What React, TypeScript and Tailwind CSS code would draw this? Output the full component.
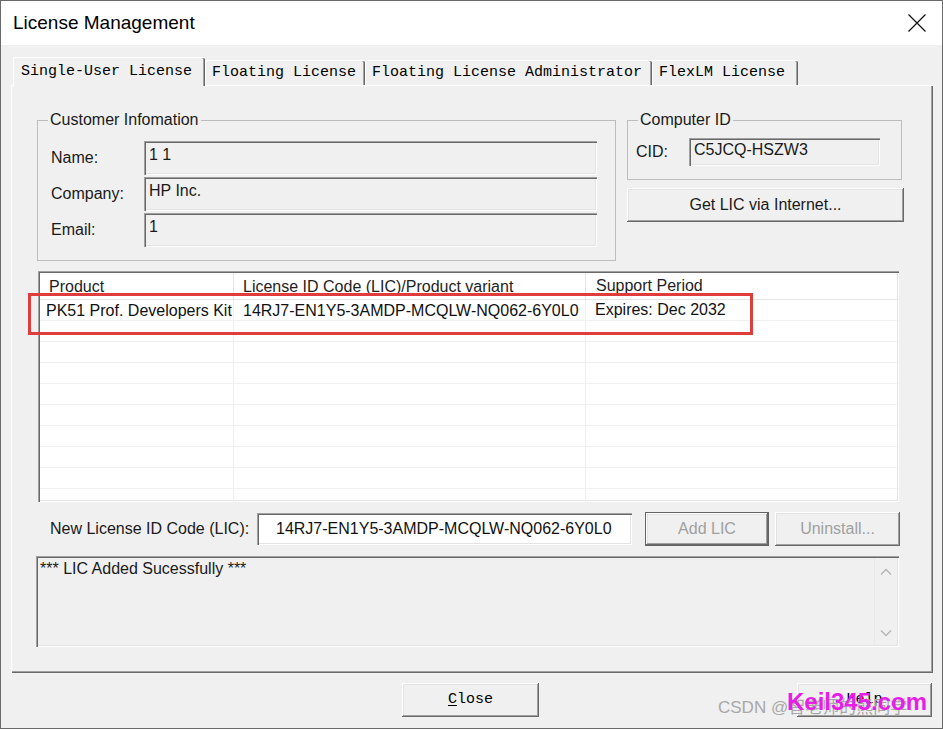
import React from "react";

// Classic Win32 bevels
const sunken =
  "shadow-[inset_1px_1px_0_#a0a0a0,inset_2px_2px_0_#696969,inset_-1px_-1px_0_#ffffff,inset_-2px_-2px_0_#e3e3e3]";
const raised =
  "shadow-[inset_-1px_-1px_0_#696969,inset_1px_1px_0_#ffffff,inset_-2px_-2px_0_#a0a0a0,inset_2px_2px_0_#e3e3e3]";

const sans = "font-['Liberation_Sans',Arial,sans-serif]";
const mono = "font-['Liberation_Mono','Courier_New',monospace]";

const tabs = [
  { label: "Floating License", w: "w-[160px]" },
  { label: "Floating License Administrator", w: "w-[287px]" },
  { label: "FlexLM License", w: "w-[146px]" },
];

const GroupBox = ({
  title,
  className,
  children,
}: {
  title: string;
  className: string;
  children: React.ReactNode;
}) => (
  <div className={`relative border border-[#bcbcbc] ${className}`}>
    <span className="absolute -top-[11px] left-[10px] bg-[#f0f0f0] px-[2px] leading-[20px] text-[#1a1a1a]">
      {title}
    </span>
    {children}
  </div>
);

const ReadOnlyField = ({ value, className }: { value: string; className: string }) => (
  <div className={`bg-[#f0f0f0] pl-[5px] pt-[3px] leading-[22px] text-[#1a1a1a] ${sunken} ${className}`}>
    {value}
  </div>
);

const Chevron = ({ up }: { up?: boolean }) => (
  <svg width="12" height="8" viewBox="0 0 12 8" fill="none">
    <path
      d={up ? "M1 6.5 L6 1.5 L11 6.5" : "M1 1.5 L6 6.5 L11 1.5"}
      stroke="#b4b4b4"
      strokeWidth="1.3"
    />
  </svg>
);

export default function App() {
  const emptyRows = Array.from({ length: 9 });

  return (
    <div className={`relative flex h-[729px] w-[943px] flex-col border border-[#6a6a6a] bg-[#f0f0f0] text-[16px] ${sans}`}>
      {/* title bar */}
      <div className="flex h-[44px] items-center justify-between bg-white pl-[12px] pr-[16px]">
        <span className="text-[19px] text-black">License Management</span>
        <svg width="18" height="18" viewBox="0 0 18 18">
          <path d="M0.5 0.5 L17.5 17.5 M17.5 0.5 L0.5 17.5" stroke="#111" strokeWidth="1.2" />
        </svg>
      </div>

      {/* tabs */}
      <div className={`flex h-[40px] items-end pl-[12px] text-[15px] text-black ${mono}`}>
        <div className="relative z-10 -mb-px flex h-[29px] w-[192px] items-center rounded-t-[2px] border-l border-t border-white bg-[#f0f0f0] pl-[7px] shadow-[inset_-1px_0_0_#696969,inset_-2px_0_0_#a0a0a0]">
          Single-User License
        </div>
        {tabs.map((t) => (
          <div
            key={t.label}
            className={`flex h-[25px] items-center rounded-t-[2px] border-l border-t border-white pl-[6px] shadow-[inset_-1px_0_0_#696969,inset_-2px_0_0_#a0a0a0] ${t.w}`}
          >
            {t.label}
          </div>
        ))}
      </div>

      {/* tab page */}
      <div className="ml-[10px] flex h-[588px] w-[922px] flex-col border-l border-t border-white pl-[25px] pt-[34px] shadow-[inset_-1px_-1px_0_#696969,inset_-2px_-2px_0_#a0a0a0]">
        <div className="flex">
          <GroupBox title="Customer Infomation" className="h-[141px] w-[579px]">
            <div className="flex flex-col gap-[2px] pl-[13px] pt-[20px]">
              {[
                ["Name:", "1 1"],
                ["Company:", "HP Inc."],
                ["Email:", "1"],
              ].map(([label, value]) => (
                <div key={label} className="flex items-center">
                  <span className="w-[93px] text-[#1a1a1a]">{label}</span>
                  <ReadOnlyField value={value} className="h-[34px] w-[453px]" />
                </div>
              ))}
            </div>
          </GroupBox>

          <div className="ml-[11px] flex w-[277px] flex-col">
            <GroupBox title="Computer ID" className="h-[60px] w-[275px]">
              <div className="flex items-center pl-[8px] pt-[17px]">
                <span className="w-[53px] text-[#1a1a1a]">CID:</span>
                <ReadOnlyField value="C5JCQ-HSZW3" className="h-[28px] w-[191px] !pt-[1px]" />
              </div>
            </GroupBox>
            <div className={`mt-[8px] flex h-[34px] w-[277px] items-center justify-center bg-[#f0f0f0] text-[#1a1a1a] ${raised}`}>
              Get LIC via Internet...
            </div>
          </div>
        </div>

        {/* license list */}
        <div className="relative ml-[1px] mt-[10px] h-[231px] w-[861px]">
          <div className={`flex h-full flex-col overflow-hidden bg-white pl-[2px] pt-[2px] ${sunken}`}>
            <div className="flex h-[27px] shrink-0 items-center border-b border-[#e5e5e5] text-[#1e1e1e]">
              <span className="h-full w-[194px] border-r border-[#e5e5e5] pl-[9px] leading-[27px]">Product</span>
              <span className="h-full w-[352px] border-r border-[#e5e5e5] pl-[9px] leading-[27px]">
                License ID Code (LIC)/Product variant
              </span>
              <span className="pl-[10px]">Support Period</span>
            </div>
            <div className="flex h-[21px] shrink-0 items-center border-b border-[#f0f0f0] text-[#111]">
              <span className="h-full w-[194px] border-r border-[#f0f0f0] pl-[6px] leading-[21px]">PK51 Prof. Developers Kit</span>
              <span className="h-full w-[352px] border-r border-[#f0f0f0] pl-[9px] leading-[21px]">
                14RJ7-EN1Y5-3AMDP-MCQLW-NQ062-6Y0L0
              </span>
              <span className="pl-[9px]">Expires: Dec 2032</span>
            </div>
            {emptyRows.map((_, i) => (
              <div key={i} className="flex h-[21px] shrink-0 border-b border-[#f0f0f0]">
                <span className="h-full w-[194px] border-r border-[#f0f0f0]" />
                <span className="h-full w-[352px] border-r border-[#f0f0f0]" />
              </div>
            ))}
          </div>
          {/* red annotation box */}
          <div className="pointer-events-none absolute left-[-10px] top-[22px] h-[42px] w-[725px] border-[3px] border-[#e03c3c]" />
        </div>

        {/* new LIC */}
        <div className="mt-[10px] flex h-[34px] items-center">
          <span className="ml-[13px] w-[207px] text-[#1a1a1a]">New License ID Code (LIC):</span>
          <div className={`flex h-[32px] w-[375px] items-center bg-white pl-[19px] text-[#111] ${sunken}`}>
            14RJ7-EN1Y5-3AMDP-MCQLW-NQ062-6Y0L0
          </div>
          <div className="ml-[13px] h-[34px] w-[124px] border border-[#646464]">
            <div className={`flex h-full items-center justify-center bg-[#f0f0f0] text-[#a0a0a0] ${raised}`}>Add LIC</div>
          </div>
          <div className={`ml-[6px] flex h-[34px] w-[125px] items-center justify-center bg-[#f0f0f0] text-[#a0a0a0] ${raised}`}>
            Uninstall...
          </div>
        </div>

        {/* log */}
        <div className={`-ml-[1px] mt-[10px] flex h-[91px] w-[863px] bg-[#f0f0f0] pl-[4px] pt-[2px] ${sunken}`}>
          <div className="flex-1 leading-[22px] text-[#1a1a1a]">*** LIC Added Sucessfully ***</div>
          <div className="mb-[2px] mr-[2px] flex w-[23px] flex-col items-center justify-between border-l border-[#e8e8e8] pb-[8px] pt-[10px]">
            <Chevron up />
            <Chevron />
          </div>
        </div>
      </div>

      {/* dialog buttons */}
      <div className={`mt-[10px] flex text-[15px] text-black ${mono}`}>
        <div className={`ml-[401px] flex h-[34px] w-[137px] items-center justify-center bg-[#f0f0f0] ${raised}`}>
          <span>
            <span className="underline underline-offset-2">C</span>lose
          </span>
        </div>
        <div className={`ml-[258px] flex h-[34px] w-[135px] items-center justify-center bg-[#f0f0f0] ${raised}`}>
          <span>
            <span className="underline underline-offset-2">H</span>elp
          </span>
        </div>
      </div>

      {/* watermark overlay */}
      <div className="pointer-events-none absolute left-[717px] top-[694px] flex items-center">
        <span className="font-['Liberation_Sans','Noto_Sans_CJK_SC',sans-serif] text-[17px] text-[#a8a8a8]">
          CSDN @智老师的熊同学
        </span>
      </div>
      <div className="pointer-events-none absolute left-[786px] top-[687px] text-[24px] font-bold leading-[28px] text-[#e81ee8]">
        Keil345.com
      </div>
    </div>
  );
}
